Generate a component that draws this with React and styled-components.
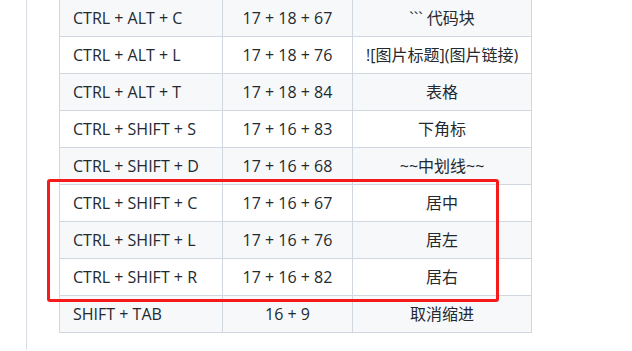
import React from 'react'
import styled, { createGlobalStyle } from 'styled-components'

const GlobalStyle = createGlobalStyle`
  html, body {
    margin: 0;
    padding: 0;
    background: #fff;
    overflow: hidden;
  }
  body {
    font-family: "Open Sans", "Noto Sans CJK SC", sans-serif;
    color: #24292f;
  }
`

const Page = styled.div`
  position: relative;
  width: 632px;
  height: 351px;
  overflow: hidden;
  padding-left: 26px;
  box-sizing: border-box;
`

const Content = styled.div`
  height: 100%;
  border-left: 1px solid #d8dee4;
  padding-left: 32px;
`

const Table = styled.table`
  border-collapse: collapse;
  margin-top: -1px;
  font-size: 16px;
  line-height: 20px;
`

const Row = styled.tr`
  background: ${p => (p.$shaded ? '#f6f8fa' : '#fff')};
`

const Cell = styled.td`
  height: 37px;
  padding: 0 13px;
  box-sizing: border-box;
  border: 1px solid #d0d7de;
  text-align: ${p => p.$align || 'center'};
  width: ${p => p.$w}px;
  white-space: nowrap;
`

const Highlight = styled.div`
  position: absolute;
  left: 47px;
  top: 179px;
  width: 452px;
  height: 123px;
  box-sizing: border-box;
  border: 3px solid #f61b1b;
  border-radius: 3px;
  pointer-events: none;
`

const rows = [
  ['CTRL + ALT + C', '17 + 18 + 67', '``` 代码块'],
  ['CTRL + ALT + L', '17 + 18 + 76', '![图片标题](图片链接)'],
  ['CTRL + ALT + T', '17 + 18 + 84', '表格'],
  ['CTRL + SHIFT + S', '17 + 16 + 83', '下角标'],
  ['CTRL + SHIFT + D', '17 + 16 + 68', '~~中划线~~'],
  ['CTRL + SHIFT + C', '17 + 16 + 67', '居中'],
  ['CTRL + SHIFT + L', '17 + 16 + 76', '居左'],
  ['CTRL + SHIFT + R', '17 + 16 + 82', '居右'],
  ['SHIFT + TAB', '16 + 9', '取消缩进'],
]

const App = () => {
  return (
    <Page>
      <GlobalStyle />
      <Content>
        <Table>
          <tbody>
            {rows.map((r, i) => (
              <Row key={i} $shaded={i % 2 === 0}>
                <Cell $align="left" $w={163}>{r[0]}</Cell>
                <Cell $w={130}>{r[1]}</Cell>
                <Cell $w={179}>{r[2]}</Cell>
              </Row>
            ))}
          </tbody>
        </Table>
      </Content>
      <Highlight />
    </Page>
  )
}

export default App
